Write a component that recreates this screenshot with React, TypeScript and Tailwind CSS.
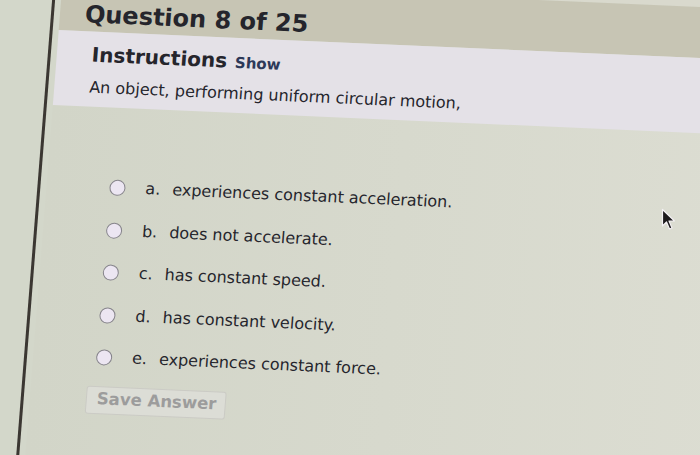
const options = [
  { key: "a.", text: "experiences constant acceleration." },
  { key: "b.", text: "does not accelerate." },
  { key: "c.", text: "has constant speed." },
  { key: "d.", text: "has constant velocity." },
  { key: "e.", text: "experiences constant force." },
];

function Radio() {
  return (
    <span className="block h-4 w-4 shrink-0 rounded-full border-[1.5px] border-[#86848b] bg-[#ece6f2]" />
  );
}

function Cursor() {
  return (
    <svg width="16" height="24" viewBox="0 0 16 24" className="absolute left-[661px] top-[208px]">
      <path
        d="M1.5 1.5 L1.5 18 L5.5 14 L8.5 21 L11 20 L8 13 L13.5 13 Z"
        fill="#1c1a1c"
        stroke="#f4f1f4"
        strokeWidth="1.2"
        strokeLinejoin="round"
      />
    </svg>
  );
}

export default function App() {
  return (
    <div className="relative h-[455px] w-[700px] overflow-hidden bg-[#d9d9cd] font-['DejaVu_Sans',sans-serif] text-[#25252c]">
      {/* photo of a screen: tilt + lean the whole page a little */}
      <div className="-ml-[30px] -mt-[8px] flex h-[530px] w-[780px] origin-[380px_235px] rotate-[2.5deg] -skew-x-2 bg-[#d3d7ca]">
        <div className="w-[68px] shrink-0 border-r-[3px] border-[#3b3732]" />

        <div className="ml-[6px] flex flex-1 flex-col bg-linear-to-r from-[#d2d5c8] to-[#dcddd2]">
          <div className="h-[51px] bg-[#c7c5b4] pl-[25px] pt-[20px]">
            <h1 className="text-[24px] font-bold leading-[28px]">Question 8 of 25</h1>
          </div>

          <div className="h-[75px] bg-[#e4e1e7] pl-[35px] pt-[11px]">
            <div className="flex items-baseline">
              <h2 className="text-[20px] font-bold leading-[24px]">Instructions</h2>
              <span className="ml-2 text-[15px] font-bold text-[#2c3858]">Show</span>
            </div>
            <p className="mt-[9px] text-[16px] leading-[20px]">
              An object, performing uniform circular motion,
            </p>
          </div>

          <div className="flex flex-col pl-[63px] pt-[59px]">
            {options.map((o) => (
              <label key={o.key} className="flex h-[42.5px] items-center text-[16px]">
                <Radio />
                <span className="ml-[20px]">{o.key}</span>
                <span className="ml-[12px]">{o.text}</span>
              </label>
            ))}
          </div>

          <div className="ml-[56px] mt-[7px]">
            <button className="h-[28px] rounded-[3px] border border-[#cbcbc5] bg-[#dcddd6] pl-[10px] pr-[8px] text-[16.5px] font-bold text-[#9c9c9c]">
              Save Answer
            </button>
          </div>
        </div>
      </div>
      <Cursor />
    </div>
  );
}
